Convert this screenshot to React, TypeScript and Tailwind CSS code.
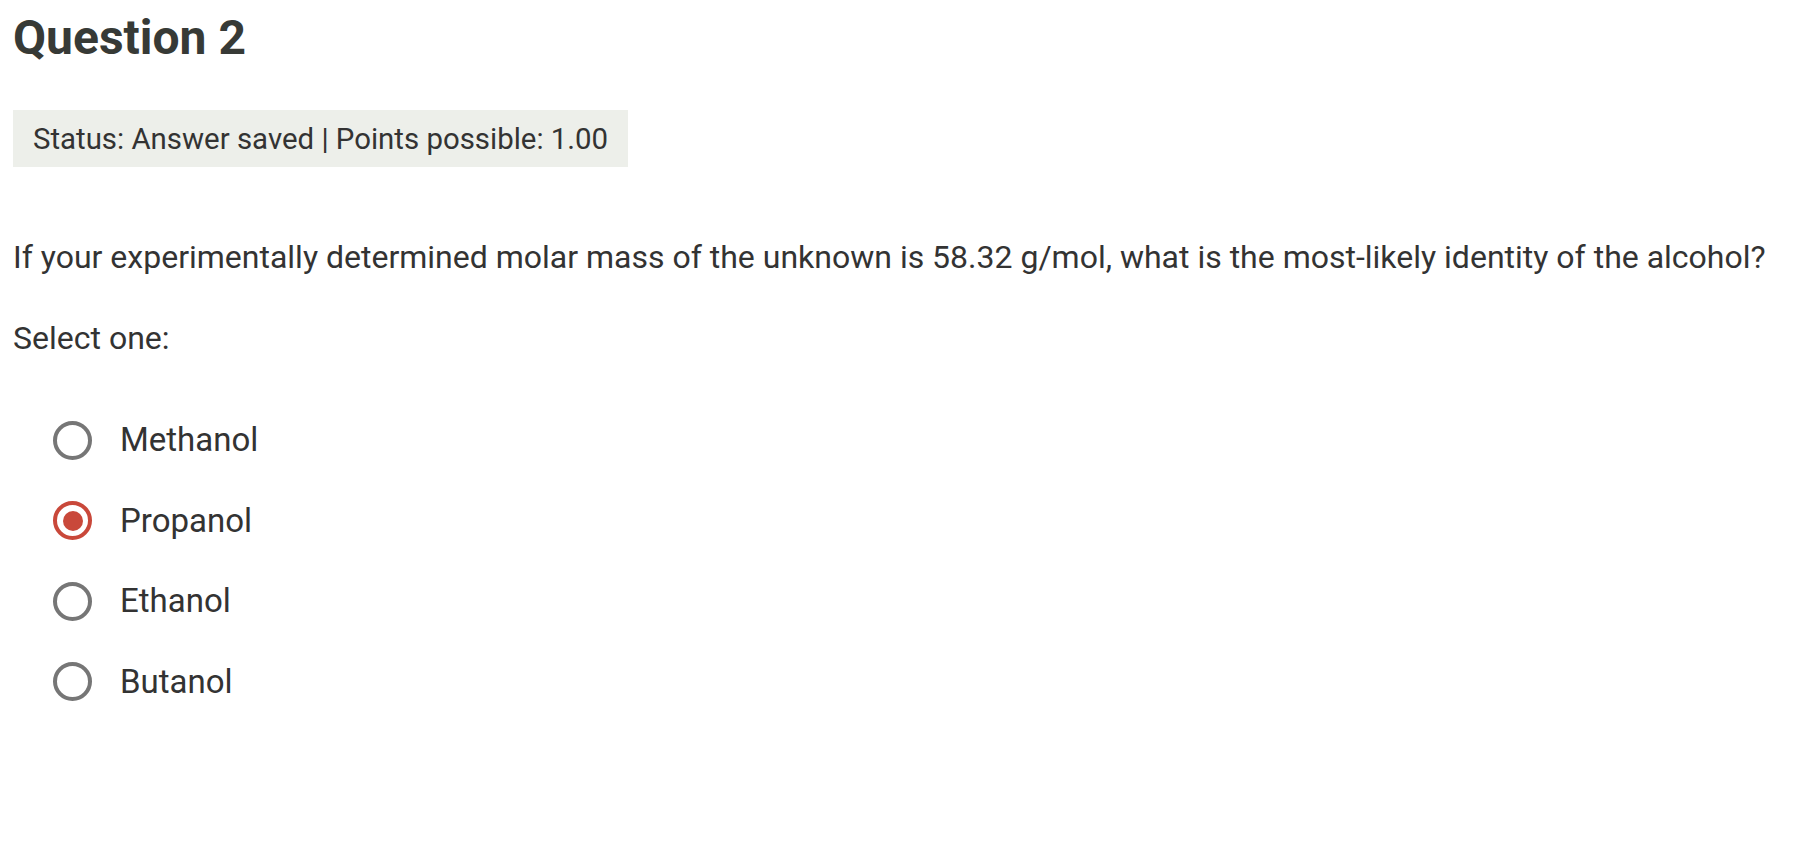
import React, { useState } from 'react';

const options = ['Methanol', 'Propanol', 'Ethanol', 'Butanol'];

const Radio = ({ checked }: { checked: boolean }) =>
    checked ? (
        <span className="w-[39px] h-[39px] rounded-full border-[4px] border-[#c9483a] flex items-center justify-center shrink-0">
            <span className="w-[20px] h-[20px] rounded-full bg-[#c9483a]" />
        </span>
    ) : (
        <span className="w-[39px] h-[39px] rounded-full border-[4px] border-[#767676] shrink-0" />
    );

const App = () => {
    const [selected, setSelected] = useState('Propanol');

    return (
        <div className="min-h-screen bg-white px-[13px] pt-[10px] text-[#333333] font-['Roboto',_'Liberation_Sans',_sans-serif]">
            <h2 className="text-[48px] leading-[56px] font-bold text-[#373a36]">Question 2</h2>

            <div className="mt-[44px] inline-block h-[57px] leading-[58px] px-[20px] bg-[#edefea] text-[29.4px]">
                Status: Answer saved | Points possible: 1.00
            </div>

            <p className="mt-[70px] text-[32px] leading-[40px]">
                If your experimentally determined molar mass of the unknown is 58.32 g/mol, what is the most-likely identity of the alcohol?
            </p>

            <p className="mt-[40px] text-[32px] leading-[42px]">Select one:</p>

            <div className="mt-[61px] ml-[40px] flex flex-col gap-[40.5px]">
                {options.map((opt) => (
                    <label
                        key={opt}
                        onClick={() => setSelected(opt)}
                        className="flex items-center gap-[28px] h-[40px] cursor-pointer text-[33px]"
                    >
                        <Radio checked={selected === opt} />
                        <span>{opt}</span>
                    </label>
                ))}
            </div>
        </div>
    );
};

export default App;
